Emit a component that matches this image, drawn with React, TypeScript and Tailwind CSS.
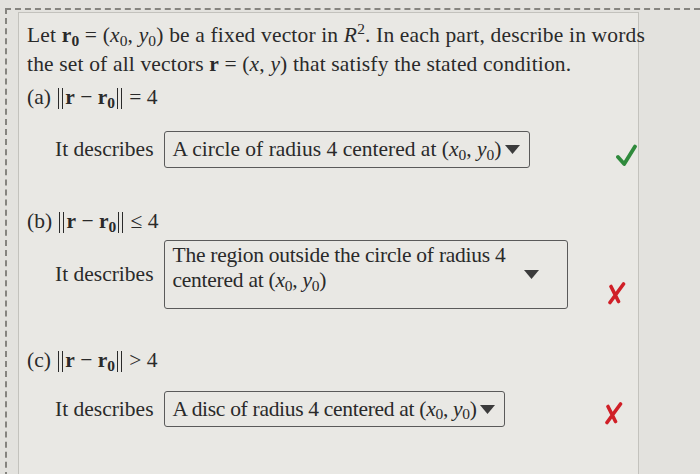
import React from "react";

const Sub = ({ children }: { children: React.ReactNode }) => (
  <sub className="text-[0.72em]">{children}</sub>
);
const R0 = () => (
  <b className="font-bold">
    r<Sub>0</Sub>
  </b>
);
const Rb = () => <b className="font-bold">r</b>;
const XY0 = () => (
  <>
    (<i>x</i>
    <Sub>0</Sub>, <i>y</i>
    <Sub>0</Sub>)
  </>
);
const Norm = () => (
  <span className="mx-[2px] inline-block h-[21px] w-[5px] border-x border-[#2a2a2a] align-[-5px]" />
);

const Tri = () => (
  <svg width="15" height="9" viewBox="0 0 15 9" className="shrink-0">
    <polygon points="0,0 15,0 7.5,9" fill="#3b3b3b" />
  </svg>
);

const Check = () => (
  <svg width="21" height="23" viewBox="0 0 21 23">
    <path
      d="M2 13 L8.2 20 L19 2.5"
      fill="none"
      stroke="#2f8a3c"
      strokeWidth="3.8"
      strokeLinecap="round"
      strokeLinejoin="round"
    />
  </svg>
);

const Cross = () => (
  <svg width="19" height="23" viewBox="0 0 19 23">
    <path
      d="M16.5 2 L3 20.5 M4 4.5 L11.5 19.5"
      fill="none"
      stroke="#d01f27"
      strokeWidth="3.6"
      strokeLinecap="round"
    />
  </svg>
);

export default function App() {
  return (
    <div className="w-[700px] h-[474px] overflow-hidden bg-[#e3e2de] pl-[5px] pt-[8px] font-['Liberation_Serif',serif] text-[#2a2a2a]">
      <div className="h-[480px] border-l-2 border-t-2 border-dashed border-[#85847f] pl-[11px] pt-[2px]">
        <div className="h-[480px] w-[621px] border border-[#c3c2bd] bg-[#e9e8e4] pl-[8px] pt-[8px] text-[21.5px]">
          <p className="leading-[29px] whitespace-nowrap tracking-[0.16px]">
            Let <R0 /> = <XY0 /> be a fixed vector in <i>R</i>
            <sup className="text-[0.72em]">2</sup>. In each part, describe in words
            <br />
            the set of all vectors <Rb /> = (<i>x</i>, <i>y</i>) that satisfy the stated condition.
          </p>

          {/* (a) */}
          <div className="mt-[4px] leading-[29px] whitespace-nowrap">
            (a) <Norm />
            <Rb /> − <R0 />
            <Norm /> = 4
          </div>
          <div className="mt-[19px] flex items-center pl-[28px] pr-[1px]">
            <span className="whitespace-nowrap">It describes</span>
            <div className="ml-[10px] flex h-[37px] items-center rounded-[3px] border border-[#5a5a5a] pl-[8px] pr-[9px]">
              <span className="whitespace-nowrap leading-[29px]">
                A circle of radius 4 centered at <XY0 />
              </span>
              <span className="ml-[4px]">
                <Tri />
              </span>
            </div>
            <div className="ml-auto self-end mb-[1px]">
              <Check />
            </div>
          </div>

          {/* (b) */}
          <div className="mt-[39px] leading-[29px] whitespace-nowrap">
            (b) <Norm />
            <Rb /> − <R0 />
            <Norm /> ≤ 4
          </div>
          <div className="mt-[4px] flex items-center pl-[28px] pr-[12px]">
            <span className="whitespace-nowrap">It describes</span>
            <div className="ml-[10px] flex h-[69px] w-[404px] items-center rounded-[3px] border border-[#5a5a5a] pl-[8px] pr-[28px]">
              <div className="flex-1 self-start pt-[2px] leading-[25px] whitespace-nowrap tracking-[-0.25px]">
                The region outside the circle of radius 4
                <br />
                centered at <XY0 />
              </div>
              <Tri />
            </div>
            <div className="ml-auto self-end mb-[4px]">
              <Cross />
            </div>
          </div>

          {/* (c) */}
          <div className="mt-[37px] leading-[29px] whitespace-nowrap">
            (c) <Norm />
            <Rb /> − <R0 />
            <Norm /> &gt; 4
          </div>
          <div className="mt-[16px] flex items-center pl-[28px] pr-[15px]">
            <span className="whitespace-nowrap">It describes</span>
            <div className="ml-[10px] flex h-[36px] items-center rounded-[3px] border border-[#5a5a5a] pl-[8px] pr-[9px]">
              <span className="whitespace-nowrap leading-[29px] tracking-[-0.3px]">
                A disc of radius 4 centered at <XY0 />
              </span>
              <span className="ml-[3px]">
                <Tri />
              </span>
            </div>
            <div className="ml-auto self-end mb-[2px]">
              <Cross />
            </div>
          </div>
        </div>
      </div>
    </div>
  );
}
